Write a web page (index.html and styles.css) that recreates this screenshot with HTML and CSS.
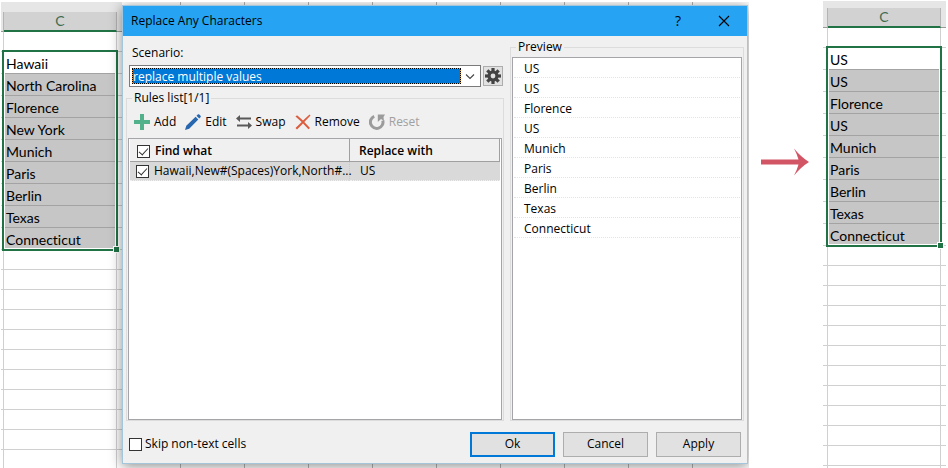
FILE: index.html
```
<!DOCTYPE html>
<html lang="en">
<head>
    <meta charset="UTF-8">
    <meta name="viewport" content="width=device-width, initial-scale=1.0">
    <title>Replace Any Characters</title>
    <link rel="stylesheet" href="styles.css">
</head>
<body>
    <main class="page">
        <section class="sheet before">
            <table class="cells">
                <thead>
                    <tr><th class="edge"></th><th class="col">C</th><th class="rest"></th></tr>
                </thead>
                <tbody>
                    <tr><td></td><td></td><td></td></tr>
                </tbody>
                <tbody class="selection">
                    <tr><td></td><td>Hawaii</td><td></td></tr>
                    <tr><td></td><td>North Carolina</td><td></td></tr>
                    <tr><td></td><td>Florence</td><td></td></tr>
                    <tr><td></td><td>New York</td><td></td></tr>
                    <tr><td></td><td>Munich</td><td></td></tr>
                    <tr><td></td><td>Paris</td><td></td></tr>
                    <tr><td></td><td>Berlin</td><td></td></tr>
                    <tr><td></td><td>Texas</td><td></td></tr>
                    <tr><td></td><td>Connecticut</td><td></td></tr>
                </tbody>
                <tbody>
                    <tr><td></td><td></td><td></td></tr>
                    <tr><td></td><td></td><td></td></tr>
                    <tr><td></td><td></td><td></td></tr>
                    <tr><td></td><td></td><td></td></tr>
                    <tr><td></td><td></td><td></td></tr>
                    <tr><td></td><td></td><td></td></tr>
                    <tr><td></td><td></td><td></td></tr>
                    <tr><td></td><td></td><td></td></tr>
                    <tr><td></td><td></td><td></td></tr>
                    <tr><td></td><td></td><td></td></tr>
                    <tr><td></td><td></td><td></td></tr>
                    <tr><td></td><td></td><td></td></tr>
                </tbody>
            </table>

            <form class="dialog">
                <header class="titlebar">
                    <h1>Replace Any Characters</h1>
                    <button type="button" class="caption-btn help" aria-label="Help">?</button>
                    <button type="button" class="caption-btn" aria-label="Close">
                        <svg width="12" height="12" viewBox="0 0 12 12"><path d="M1 1l10 10M11 1L1 11" stroke="#000" stroke-width="1.1" fill="none"/></svg>
                    </button>
                </header>

                <div class="panes">
                    <div class="rules-pane">
                        <label class="scenario-label" for="scenario">Scenario:</label>
                        <div class="scenario">
                            <div class="combo">
                                <select id="scenario">
                                    <option>replace multiple values</option>
                                </select>
                                <svg width="17" height="16" viewBox="0 0 17 16"><path d="M5 6.5l4 4 4-4" stroke="#444" stroke-width="1.1" fill="none"/></svg>
                            </div>
                            <button type="button" class="gear" aria-label="Manage scenarios">
                                <svg width="16" height="16" viewBox="-8 -8 16 16">
                                    <g fill="#444">
                                        <rect x="-1.6" y="-8" width="3.2" height="16"/>
                                        <rect x="-1.6" y="-8" width="3.2" height="16" transform="rotate(45)"/>
                                        <rect x="-1.6" y="-8" width="3.2" height="16" transform="rotate(90)"/>
                                        <rect x="-1.6" y="-8" width="3.2" height="16" transform="rotate(135)"/>
                                        <circle r="5.5"/>
                                    </g>
                                    <circle r="2.4" fill="#e1e1e1"/>
                                </svg>
                            </button>
                        </div>

                        <fieldset class="group rules">
                            <legend>Rules list[1/1]</legend>
                            <div class="toolbar">
                                <button type="button">
                                    <svg width="16" height="16" viewBox="0 0 16 16"><path d="M6 0h4v6h6v4h-6v6H6v-6H0V6h6z" fill="#50b18a"/></svg>
                                    Add
                                </button>
                                <button type="button">
                                    <svg width="16" height="16" viewBox="0 0 16 16"><path d="M0 16l1.300-4.200L10.600 2.700l2.700 2.700-9.100 9.300zM11.500 1.800L12.800.500c.5-.5 1-.5 1.500 0l1.200 1.200c.5.5.5 1 0 1.500l-1.300 1.300z" fill="#2667b0"/></svg>
                                    Edit
                                </button>
                                <button type="button">
                                    <svg width="16" height="16" viewBox="0 0 16 16"><path d="M0 4.500L4 1v2.500h11v2H4V8zM16 11.500L12 8v2.500H1v2h11V15z" fill="#595959"/></svg>
                                    Swap
                                </button>
                                <button type="button">
                                    <svg width="16" height="16" viewBox="0 0 16 16"><path d="M.5 2.500Q2 .500 3.500 2.500L8 6.600 14.500.500 15.500 1.500 9.300 8 15 14 13.500 15.200 8 9.400 2 15.500.500 14 6.700 8z" fill="#dc5c3e"/></svg>
                                    Remove
                                </button>
                                <button type="button" disabled>
                                    <svg width="16" height="16" viewBox="0 0 16 16"><path d="M5.200 2.300A6.300 6.300 0 1 0 13.800 6.500" stroke="#9b9b9b" stroke-width="3" fill="none"/><path d="M8.800.500H16L14.500 3l.5 4-3-2-3.200 3z" fill="#9b9b9b"/></svg>
                                    Reset
                                </button>
                            </div>
                            <div class="list">
                                <table class="rule-table">
                                    <thead>
                                        <tr>
                                            <th><span class="check"><input type="checkbox" id="all" checked><label for="all">Find what</label></span></th>
                                            <th>Replace with</th>
                                        </tr>
                                    </thead>
                                    <tbody>
                                        <tr>
                                            <td><span class="check"><input type="checkbox" id="rule1" checked><label for="rule1">Hawaii,New#(Spaces)York,North#...</label></span></td>
                                            <td>US</td>
                                        </tr>
                                    </tbody>
                                </table>
                            </div>
                        </fieldset>
                    </div>

                    <fieldset class="group preview">
                        <legend>Preview</legend>
                        <ul class="list">
                            <li>US</li>
                            <li>US</li>
                            <li>Florence</li>
                            <li>US</li>
                            <li>Munich</li>
                            <li>Paris</li>
                            <li>Berlin</li>
                            <li>Texas</li>
                            <li>Connecticut</li>
                        </ul>
                    </fieldset>
                </div>

                <footer class="actions">
                    <span class="skip"><input type="checkbox" id="skip"><label for="skip">Skip non-text cells</label></span>
                    <button type="button" class="btn default">Ok</button>
                    <button type="button" class="btn">Cancel</button>
                    <button type="button" class="btn">Apply</button>
                </footer>
            </form>
        </section>

        <div class="arrow">
            <svg width="48" height="28" viewBox="0 0 48 28"><path d="M0 11.500h37.500Q36 6 33 0.500 40 9 48 14 40 19 33 27.500 36 22 37.500 16.500H0z" fill="#d25565"/></svg>
        </div>

        <section class="sheet after">
            <table class="cells">
                <thead>
                    <tr><th class="edge"></th><th class="col">C</th><th class="rest"></th></tr>
                </thead>
                <tbody>
                    <tr><td></td><td></td><td></td></tr>
                </tbody>
                <tbody class="selection">
                    <tr><td></td><td>US</td><td></td></tr>
                    <tr><td></td><td>US</td><td></td></tr>
                    <tr><td></td><td>Florence</td><td></td></tr>
                    <tr><td></td><td>US</td><td></td></tr>
                    <tr><td></td><td>Munich</td><td></td></tr>
                    <tr><td></td><td>Paris</td><td></td></tr>
                    <tr><td></td><td>Berlin</td><td></td></tr>
                    <tr><td></td><td>Texas</td><td></td></tr>
                    <tr><td></td><td>Connecticut</td><td></td></tr>
                </tbody>
                <tbody>
                    <tr><td></td><td></td><td></td></tr>
                    <tr><td></td><td></td><td></td></tr>
                    <tr><td></td><td></td><td></td></tr>
                    <tr><td></td><td></td><td></td></tr>
                    <tr><td></td><td></td><td></td></tr>
                    <tr><td></td><td></td><td></td></tr>
                    <tr><td></td><td></td><td></td></tr>
                    <tr><td></td><td></td><td></td></tr>
                    <tr><td></td><td></td><td></td></tr>
                    <tr><td></td><td></td><td></td></tr>
                    <tr><td></td><td></td><td></td></tr>
                    <tr><td></td><td></td><td></td></tr>
                </tbody>
            </table>
        </section>
    </main>
</body>
</html>
```
FILE: styles.css
```
*, *::before, *::after {
    box-sizing: border-box;
}
body {
    margin: 0;
    background: #fff;
    color: #000;
    font-family: "Open Sans", "Noto Sans", sans-serif;
    font-size: 12px;
    line-height: 16px;
}
button, select, input {
    font: inherit;
    color: inherit;
    margin: 0;
}
.page {
    display: flex;
    height: 100vh;
    min-height: 400px;
    padding: 0 2px 0 1px;
    overflow: hidden;
}

/* spreadsheet */
.sheet {
    overflow: hidden;
}
.before {
    --gutter: 3px;
    display: flex;
    flex: 1;
    margin-top: 2px;
    background: repeating-linear-gradient(to right, #fff 0 51px, #b4b4b4 51px 52px, #fff 52px 64px);
}
.after {
    --gutter: 5px;
    width: 123px;
    margin-top: 1px;
}
.cells {
    width: 123px;
    flex: none;
    border-spacing: 0;
    table-layout: fixed;
    background: #fff;
    font-family: Lato, "Open Sans", sans-serif;
    font-size: 14px;
    line-height: 18px;
    font-variant-ligatures: none;
}
.before .cells {
    width: 121px;
    border-top: 10px solid #e6e6e6;
}
.after .cells {
    border-top: 7px solid #e6e6e6;
}
.cells th {
    height: 20px;
    padding: 0;
    background: #e6e6e6;
    border-bottom: 1px solid #9b9b9b;
    font-weight: normal;
}
.cells .edge {
    width: var(--gutter);
    border-right: 1px solid #b4b4b4;
}
.cells .col {
    width: 113px;
    background: #d2d2d2;
    color: #3f6b51;
    border-right: 1px solid #b4b4b4;
    border-bottom: 2px solid #217346;
}
.cells td {
    height: 20px;
    padding: 0 0 0 2px;
    border-bottom: 1px solid #d0d0d0;
    border-right: 1px solid #d0d0d0;
    white-space: nowrap;
}
.cells td:first-child {
    padding: 0;
}
.cells td:last-child {
    padding: 0;
    border-right: 0;
}
.selection {
    position: relative;
}
.selection td {
    height: 22px;
    padding-top: 3px;
}
.selection td:nth-child(2) {
    background: #c6c6c6;
    border-bottom-color: #a3a3a3;
}
.selection tr:first-child td:nth-child(2) {
    background: #fff;
}
/* frame and fill handle lie over the selected cells */
.selection::before {
    content: "";
    position: absolute;
    top: -2px;
    left: calc(var(--gutter) - 2px);
    width: 116px;
    height: 201px;
    border: 2px solid #217346;
    box-shadow: inset 0 0 0 1px #fff;
}
.selection::after {
    content: "";
    position: absolute;
    bottom: -3px;
    left: calc(var(--gutter) + 109px);
    width: 7px;
    height: 7px;
    background: #217346;
    border: 1px solid #fff;
}

/* dialog window */
.dialog {
    position: relative;
    flex: 1;
    display: flex;
    flex-direction: column;
    margin: 3px 1px 4px 0;
    background: #f0f0f0;
    border: 1px solid #a3c6da;
    box-shadow: 0 2px 12px rgba(0, 0, 0, 0.45);
}
.titlebar {
    display: flex;
    align-items: center;
    height: 30px;
    padding-left: 8px;
    background: #26a4f3;
}
.titlebar h1 {
    flex: 1;
    margin: 0;
    font-size: 12px;
    font-weight: normal;
}
.caption-btn {
    display: flex;
    align-items: center;
    justify-content: center;
    width: 46px;
    height: 30px;
    padding: 0;
    background: none;
    border: 0;
}
.help {
    font-size: 14px;
}
.panes {
    flex: 1;
    display: grid;
    grid-template-columns: 21fr 13fr;
    gap: 6px;
    padding: 3px 3px 0;
}
.rules-pane {
    display: flex;
    flex-direction: column;
    padding-top: 6px;
}
.scenario-label {
    padding-left: 6px;
}
.scenario {
    display: flex;
    align-items: center;
    gap: 2px;
    margin: 4px 1px 3px 3px;
}
.combo {
    flex: 1;
    display: flex;
    height: 22px;
    padding: 2px;
    background: #fff;
    border: 1px solid #7a7a7a;
}
.combo select {
    flex: 1;
    height: 16px;
    padding: 1px 0 0;
    appearance: none;
    border: 1px dotted #000;
    border-radius: 0;
    background: linear-gradient(#0078d7, #0078d7) padding-box, #f59a4a border-box;
    color: #fff;
    line-height: 14px;
}
.gear {
    display: flex;
    align-items: center;
    justify-content: center;
    width: 20px;
    height: 20px;
    padding: 0;
    background: #e1e1e1;
    border: 1px solid #adadad;
}
.group {
    display: flex;
    flex-direction: column;
    min-width: 0;
    margin: 0;
    padding: 0 1px;
    border: 1px solid #dcdcdc;
}
.group legend {
    margin-left: 4px;
    padding: 0 2px;
}
.rules {
    flex: 1;
}
.preview {
    padding-top: 2px;
}
.toolbar {
    display: flex;
    align-items: center;
    gap: 9px;
    height: 32px;
    padding-left: 6px;
}
.toolbar button {
    display: flex;
    align-items: center;
    gap: 4px;
    padding: 0;
    background: none;
    border: 0;
}
.toolbar button:disabled {
    color: #a0a0a0;
}
.list {
    flex: 1;
    margin: 0;
    padding: 0 1px;
    list-style: none;
    background: #fff;
    border: 1px solid #a5a5a9;
}
.rule-table {
    width: 100%;
    border-spacing: 0;
    table-layout: fixed;
}
.rule-table th {
    height: 23px;
    padding: 2px 0 0 9px;
    background: #f0f0f0;
    border-right: 1px solid #a0a0a0;
    border-bottom: 1px solid #a0a0a0;
    font-weight: 600;
    text-align: left;
}
.rule-table td {
    height: 19px;
    padding: 0 0 0 10px;
    background: #d9d9d9;
    border-bottom: 1px dotted #f0f0f0;
    white-space: nowrap;
}
.rule-table th:first-child {
    width: 220px;
    padding-left: 7px;
}
.rule-table td:first-child {
    padding-left: 6px;
    border-right: 1px dotted #c8c8c8;
}
.check, .skip {
    display: flex;
    align-items: center;
    gap: 5px;
}
.check {
    height: 18px;
}
input[type="checkbox"] {
    appearance: none;
    position: relative;
    flex: none;
    width: 13px;
    height: 13px;
    background: #fff;
    border: 1px solid #333;
}
input[type="checkbox"]:checked::after {
    content: "";
    position: absolute;
    top: 0;
    left: 3px;
    width: 5px;
    height: 9px;
    border: solid #333;
    border-width: 0 1px 1px 0;
    transform: rotate(42deg);
}
.preview li {
    height: 20px;
    padding: 3px 0 0 10px;
    border-bottom: 1px dotted #e4e4e4;
}
.actions {
    display: flex;
    align-items: center;
    gap: 8px;
    height: 42px;
    padding: 4px 6px 0;
}
.skip {
    flex: 1;
    gap: 3px;
}
.btn {
    width: 85px;
    height: 25px;
    padding: 0;
    background: #e1e1e1;
    border: 1px solid #adadad;
}
.default {
    border: 2px solid #0078d7;
}

.arrow {
    display: flex;
    align-items: center;
    justify-content: center;
    width: 74px;
    padding: 0 2px 144px 0;
}
```
